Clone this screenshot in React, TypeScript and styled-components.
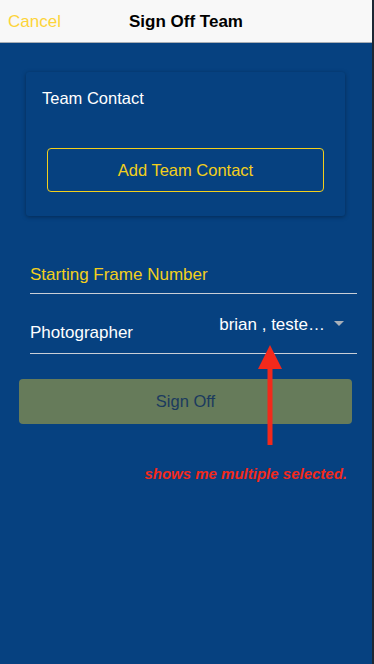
import React, { ReactElement } from "react";
import styled, { createGlobalStyle } from "styled-components";

const texts = {
  cancel: "Cancel",
  title: "Sign Off Team",
  teamContact: "Team Contact",
  addTeamContact: "Add Team Contact",
  frameNumber: "Starting Frame Number",
  photographer: "Photographer",
  photographerValue: "brian , teste…",
  signOff: "Sign Off",
  note: "shows me multiple selected.",
};

const GlobalStyle = createGlobalStyle`
  html, body {
    margin: 0;
    padding: 0;
    background: #064180;
  }
  body {
    font-family: "Liberation Sans", Arial, sans-serif;
  }
`;

const Screen = styled.div`
  position: relative;
  width: 372px;
  height: 664px;
  background: #064180;
  border-right: 2px solid #1d2733;
  overflow: hidden;
`;

const NavBar = styled.header`
  height: 42px;
  background: #f8f8f8;
  border-bottom: 1px solid #a7adb4;
  display: flex;
  align-items: center;
  position: relative;
`;

const NavCancel = styled.span`
  padding-left: 8px;
  padding-top: 2px;
  color: #fdd43a;
  font-size: 17px;
`;

const NavTitle = styled.h1`
  position: absolute;
  left: 0;
  right: 0;
  margin: 0;
  padding-top: 1px;
  text-align: center;
  font-size: 17px;
  font-weight: bold;
  color: #000;
  pointer-events: none;
`;

const Content = styled.main`
  padding: 29px 15px 0 19px;
  display: flex;
  flex-direction: column;
`;

const Card = styled.section`
  margin: 0 12px 0 7px;
  height: 144px;
  box-sizing: border-box;
  padding: 17px 21px 0 16px;
  border-radius: 3px;
  background: #064180;
  box-shadow: 0 1px 4px rgba(0, 0, 0, 0.35);
`;

const CardTitle = styled.div`
  color: #fff;
  font-size: 16.5px;
`;

const OutlineButton = styled.button`
  display: block;
  height: 44px;
  margin: 40px 0 0 5px;
  width: calc(100% - 5px);
  background: transparent;
  border: 1px solid #f3cf1c;
  border-radius: 4px;
  color: #f3cf1c;
  font-family: inherit;
  font-size: 16.5px;
`;

const FieldRow = styled.div<{ $height: number }>`
  margin-left: 11px;
  height: ${(p) => p.$height}px;
  border-bottom: 1px solid #c9ced6;
  display: flex;
  align-items: flex-end;
  justify-content: space-between;
  box-sizing: border-box;
`;

const Placeholder = styled.span`
  color: #f3cf1c;
  font-size: 17px;
  padding-bottom: 8px;
`;

const Label = styled.span`
  color: #fff;
  font-size: 17px;
  padding-bottom: 10px;
`;

const SelectValue = styled.span`
  display: flex;
  align-items: center;
  gap: 9px;
  align-self: flex-start;
  margin-top: 21px;
  margin-right: 13px;
  color: #fff;
  font-size: 17px;
`;

const Caret = styled.span`
  width: 0;
  height: 0;
  border-left: 5px solid transparent;
  border-right: 5px solid transparent;
  border-top: 5px solid #a9b0b8;
  margin-top: -3px;
`;

const SignOffButton = styled.button`
  margin-top: 25px;
  height: 45px;
  width: 333px;
  border: none;
  border-radius: 4px;
  background: #667b5a;
  color: #1b3a5e;
  font-family: inherit;
  font-size: 16.5px;
`;

const Note = styled.p`
  margin: 41px 10px 0 0;
  text-align: right;
  color: #f2291b;
  font-size: 15px;
  font-weight: bold;
  font-style: italic;
`;

const Arrow = styled.svg`
  position: absolute;
  left: 256px;
  top: 344px;
`;

const App = (): ReactElement => (
  <>
    <GlobalStyle />
    <Screen>
      <NavBar>
        <NavCancel>{texts.cancel}</NavCancel>
        <NavTitle>{texts.title}</NavTitle>
      </NavBar>
      <Content>
        <Card>
          <CardTitle>{texts.teamContact}</CardTitle>
          <OutlineButton>{texts.addTeamContact}</OutlineButton>
        </Card>
        <FieldRow $height={78}>
          <Placeholder>{texts.frameNumber}</Placeholder>
        </FieldRow>
        <FieldRow $height={60}>
          <Label>{texts.photographer}</Label>
          <SelectValue>
            {texts.photographerValue}
            <Caret />
          </SelectValue>
        </FieldRow>
        <SignOffButton>{texts.signOff}</SignOffButton>
        <Note>{texts.note}</Note>
      </Content>
      <Arrow width="28" height="102" viewBox="0 0 28 102">
        <polygon points="14,1 2,25 26,25" fill="#f2291b" />
        <rect x="11.5" y="24" width="5" height="77" fill="#f2291b" />
      </Arrow>
    </Screen>
  </>
);

export default App;
